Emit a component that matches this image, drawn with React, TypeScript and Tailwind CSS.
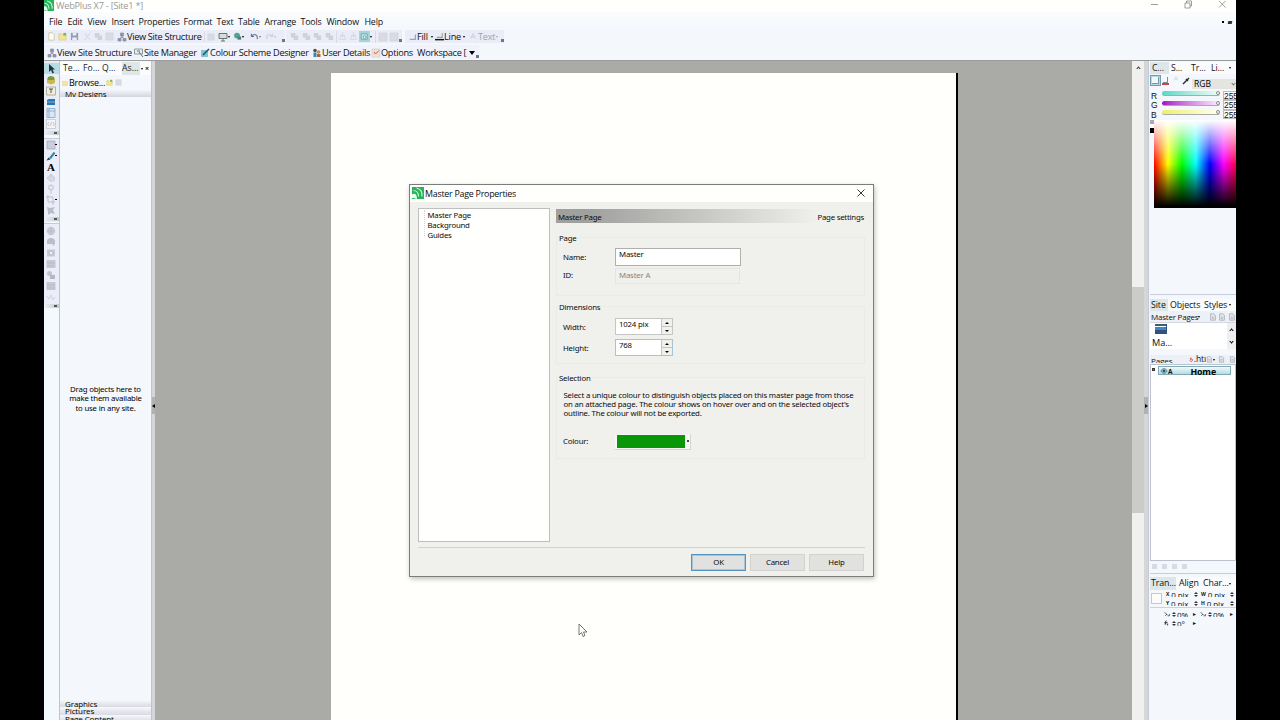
import type { ReactNode } from 'react';

const menuItems = [
    { label: 'File', width: 'w-[18.5px]' },
    { label: 'Edit', width: 'w-5' },
    { label: 'View', width: 'w-6' },
    { label: 'Insert', width: 'w-[27px]' },
    { label: 'Properties', width: 'w-[45px]' },
    { label: 'Format', width: 'w-[33px]' },
    { label: 'Text', width: 'w-[21.5px]' },
    { label: 'Table', width: 'w-[26.5px]' },
    { label: 'Arrange', width: 'w-9' },
    { label: 'Tools', width: 'w-[26px]' },
    { label: 'Window', width: 'w-[38px]' },
    { label: 'Help', width: 'w-5' },
];

const Logo = ({ className }: { className: string }) => (
    <svg viewBox="0 0 12 12" className={className}>
        <rect width="12" height="12" fill="#27b45c" />
        <path d="M1.500 3.500c3 0 5 2 5 6M4.500 1c4 1 6 4 5.500 8.500" fill="none" stroke="#c9f7d7" strokeWidth="1.1" />
        <path d="M0 7.500c3-2 5 0 5 4.500-2-.5-3.500-1-5-1z" fill="#eafff0" />
    </svg>
);

// Small glyphs shared by the toolbars, all on a 10x10 grid
const shapes: Record<string, ReactNode> = {
    page: <path d="M2 1h4l2 2v6H2z" fill="#fffef4" stroke="#c5bd94" strokeWidth=".8" />,
    doc: <><path d="M2 1h4l2 2v6H2z" fill="#e4e9ef" stroke="#969da8" strokeWidth=".8" /><path d="M3.500 5h3M3.500 7h3" stroke="#8b95a3" strokeWidth=".7" /></>,
    folder: <><path d="M1 2h3l1 1h4v6H1z" fill="#f3e58b" stroke="#d4c66f" strokeWidth=".6" /><path d="M6 1h3v3H6z" fill="#7faf6e" /></>,
    browse: <path d="M1 2h3l1 1h4v6H1z" fill="#f6e9a0" stroke="#dccb7e" strokeWidth=".8" />,
    save: <><path d="M1 1h8v8H1z" fill="#8f9db5" /><path d="M3 1h4v3H3zM2.5 6h5v3h-5z" fill="#e9eff7" /></>,
    cut: <path d="M2 1l6 8M8 1L2 9" stroke="#d3d5dd" strokeWidth="1.1" fill="none" />,
    copy: <path d="M1 1h5v5H1zM4 4h5v5H4z" fill="#cfd1da" />,
    grid: <path d="M1 1h8v8H1z" fill="#d9dbe3" stroke="#cfd2dc" strokeWidth=".6" />,
    tree: <><path d="M3.500 1h3v3h-3zM1 6.500h3V9H1zM6 6.500h3V9H6z" fill="#8d94a8" stroke="#8d94a8" strokeWidth=".8" /><path d="M5 3v2.500M2 7L5 5l3 2" stroke="#8d94a8" fill="none" /></>,
    manager: <><path d="M.5 1h8v5h-8z" fill="#e6edee" stroke="#788587" strokeWidth=".8" /><path d="M5 4l4 5M3 3h3" stroke="#657276" /></>,
    scheme: <><path d="M1 2h7v7H1z" fill="#7cc5d8" /><path d="M3 7l6-6" stroke="#2f5068" strokeWidth="1.6" /></>,
    user: <><circle cx="3" cy="2.500" r="1.800" fill="#52504b" /><circle cx="6.500" cy="4" r="1.800" fill="#c78a5a" /><path d="M1.500 4.500h3V9h-3z" fill="#3e85a8" /><path d="M5 6h3.500v3H5z" fill="#ae6046" /></>,
    options: <><path d="M1 1h8v8H1z" fill="#f4ded4" stroke="#d2c9c3" strokeWidth=".6" /><path d="M3 4l1.500 2L8 2.500" stroke="#b4624a" fill="none" /></>,
    screen: <><path d="M1 1.500h8v5H1z" fill="#d4dedb" stroke="#6a7471" /><path d="M5 6v3M3 9h4" stroke="#6a7471" /></>,
    globe: <><circle cx="4.500" cy="4" r="3.300" fill="#4fa68f" /><path d="M5 5h4v3.500H5z" fill="#517c86" /></>,
    eye: <><path d="M1 5c2-4 6-4 8 0-2 4-6 4-8 0z" fill="#8db8c4" stroke="#4e6f80" strokeWidth=".8" /><circle cx="5" cy="5" r="1.500" fill="#34546b" /></>,
    undo: <path d="M1.500 2v3h3M2 5c2-4 7-2 6 3" fill="none" stroke="#67749a" strokeWidth="1.200" />,
    redo: <path d="M8.500 2v3h-3M8 5C6 1 1 3 2 8" fill="none" stroke="#ced1da" strokeWidth="1.200" />,
    snap: <><path d="M0 0h10v10H0z" fill="#a3d6da" /><path d="M2 2.500h5.500v5H2z" fill="#c4e6e7" stroke="#659fae" strokeWidth=".7" /><circle cx="5" cy="5.500" r="1.300" fill="#e3f2f3" stroke="#5b9aaa" strokeWidth=".7" /></>,
    align: <path d="M5 0v5M2 4h6M1 8h8M2 7l2-3M8 7L6 4" stroke="#d1d4dc" fill="none" />,
    fill: <path d="M1 8h7V2" stroke="#a1a5ad" strokeWidth="1.600" fill="none" />,
    line: <><path d="M2 6h6V1" stroke="#9a9ea7" strokeWidth="1.200" fill="none" /><path d="M0 8.500h10" stroke="#111" strokeWidth="1.600" /></>,
    text: <path d="M2 7l3-6 3 6M3 5h4" fill="none" stroke="#c6c9d1" />,
    pointer: <path d="M3 0v8l2-2 1.500 3.500 1.500-.7L6.500 5.500H9z" fill="#1d3545" />,
    apple: <><path d="M1 3l4-2 4 2v5L5 9.500 1 8z" fill="#c9b74f" /><path d="M2 2l3-1 3 1v3H2z" fill="#719b45" /></>,
    frame: <><path d="M.5 1h9v8h-9z" fill="#f0eedc" stroke="#a3a18d" strokeWidth=".8" /><path d="M3 3h4M5 3v4" stroke="#51514d" /></>,
    button: <><path d="M1 3l2-1h6v6H1z" fill="#2d74ad" /><path d="M1 5h8" stroke="#75b2dd" /></>,
    table: <path d="M1 .5h8v9H1zM1 3h8M3 .5v9" fill="#d7e7f5" stroke="#84a7c6" strokeWidth=".8" />,
    code: <><path d="M.5.5h9v9h-9z" fill="#f2f4f6" stroke="#b5bbc3" strokeWidth=".6" /><path d="M3 3L1.500 5 3 7M7 3l1.500 2L7 7M5.500 3l-1 4" stroke="#9ca4af" strokeWidth=".6" fill="none" /></>,
    square: <path d="M1 1h8v8H1z" fill="#cbccdd" stroke="#a5a7b8" strokeWidth=".8" />,
    pen: <><path d="M3 7l4.500-6 2 1L5 8z" fill="#35899e" /><path d="M.5 9.500l2-3 2 2z" fill="#283b48" /></>,
    bucket: <path d="M5 1l4 4-4 4-4-4zM8 5v4M5 1v4" fill="#d9dbe3" stroke="#c5c8d0" strokeWidth=".8" />,
    pin: <><circle cx="5" cy="3.500" r="2.500" fill="#e5e7ef" stroke="#bfc2cc" /><path d="M5 6v4" stroke="#bfc2cc" /></>,
    crop: <path d="M2 0v7h7M0 2h7v8" fill="none" stroke="#bbbfc9" />,
    bolt: <path d="M1 1l3 1 5-1-2 3 2 4-4-1-3 2V6z" fill="#b9bdc8" />,
    disc: <><circle cx="5" cy="5" r="4.200" fill="#c8cbd5" /><path d="M1 5h8M5 1v8" stroke="#b7bac6" strokeWidth=".6" /></>,
    stamp: <path d="M1 4c0-4 8-4 8 0v2l-1 3-2-2H1z" fill="#babec9" />,
    camera: <><path d="M1 1.500h8v7H1z" fill="#c8cbd5" /><circle cx="5" cy="5" r="2" fill="#eef0f5" stroke="#b6bac5" /></>,
    film: <><path d="M.5 1h9v8h-9z" fill="#c6c9d3" /><path d="M1 4h8M1 7h8" stroke="#b3b7c1" strokeWidth=".6" /></>,
    shapes: <><circle cx="3.500" cy="3.500" r="2.500" fill="#c1c4cf" /><path d="M4 5h5v4H4z" fill="#b4b8c4" /></>,
    wave: <path d="M1 4l2 3 2-4 2 5 2-3" fill="none" stroke="#d0d3db" />,
    scale: <path d="M1 2l5 5M2 8l3-3M6 8h3V5" stroke="#333" strokeWidth="1.200" fill="none" />,
    rotate: <path d="M2 8V4h4M4 1L1.500 4 4 7M6 6v3" stroke="#222" strokeWidth="1.400" fill="none" />,
    refresh: <path d="M4 1L2 4l3 1M2 4c3-1 6 0 5 3S2 9 2 6.500" stroke="#cc3a61" strokeWidth="1.400" fill="none" />,
};

const Icon = ({ name, className = 'size-[9px]' }: { name: string; className?: string }) => (
    <svg viewBox="0 0 10 10" className={`${className} shrink-0`}>{shapes[name]}</svg>
);

const Down = ({ className = 'border-t-black' }: { className?: string }) => (
    <span className={`inline-block shrink-0 border-x-[1.5px] border-t-2 border-x-transparent ${className}`} />
);

const Grip = () => <span className="mb-px size-[3px] shrink-0 self-end bg-[#73777c]" />;

const Tool = ({ icon, label, width }: { icon: string; label: string; width: string }) => (
    <span className={`flex shrink-0 items-center ${width}`}>
        <Icon name={icon} className="size-[10px]" />
        <span>{label}</span>
    </span>
);

function Header() {
    return (
        <header className="h-[60px] shrink-0 bg-[#f4f8fd] text-[9.2px] leading-none text-[#111]">
            <div className="flex h-3 items-start justify-between bg-[#fffffd] text-[#999]">
                <div className="flex items-center">
                    <Logo className="-ml-px size-[11px]" />
                    <span className="ml-0.5 tracking-[-0.24px]">WebPlus X7 - [Site1 *]</span>
                </div>
                <svg viewBox="0 0 86 10" className="h-2.5 w-[86px]" fill="none" stroke="#858585" strokeWidth=".8">
                    <path d="M1 4.500h7M35 3h5v5h-5zM36.500 3V1h5v5H40M69 1l6.500 6.500M75.500 1L69 7.500" />
                </svg>
            </div>
            <div className="flex h-[17px] items-center bg-gradient-to-b from-[#fbfdfd] to-[#f4f8fd] pl-[5px] pt-[3px]">
                {menuItems.map((item) => (
                    <span key={item.label} className={`shrink-0 text-[8.9px] tracking-[-0.2px] ${item.width}`}>{item.label}</span>
                ))}
                <span className="ml-auto flex items-center gap-1 pr-1"><i className="h-0.5 w-0.5 bg-black" /><i className="h-[3px] w-1 -skew-x-12 bg-[#333]" /></span>
            </div>
            <div className="flex h-[15px] items-center tracking-[-0.22px]">
                <div className="flex h-[13px] w-[241px] items-center bg-[#eaecf7] pl-[3px]">
                    <Icon name="page" /><Icon name="folder" className="ml-0.5 size-[9px]" /><Icon name="save" className="ml-[3px] size-[9px]" />
                    <Icon name="cut" className="ml-1 size-[9px]" /><Icon name="copy" className="ml-0.5 size-[9px]" /><Icon name="grid" className="ml-0.5 size-[9px]" />
                    <span className="ml-[3px] flex w-[88px] shrink-0 items-center border-r border-[#d8dbe5] tracking-[-0.32px]"><Icon name="tree" className="size-[10px]" /><span>View Site Structure</span></span>
                    <Icon name="grid" className="ml-0.5 size-2" /><Icon name="screen" className="ml-[3px] size-2.5" /><Down />
                    <Icon name="globe" className="ml-[3px] size-[9px]" /><Down />
                    <Icon name="undo" className="ml-1.5 size-[9px]" /><Down className="border-t-[#777]" />
                    <Icon name="redo" className="ml-1 size-[9px]" /><Down className="border-t-[#bbb]" /><span className="ml-auto flex self-stretch"><Grip /></span>
                </div>
                <div className="ml-px flex h-[13px] w-[116px] items-center bg-[#eaecf7] pl-[4px]">
                    <div className="flex gap-[2.5px]"><Icon name="copy" /><Icon name="copy" /><Icon name="copy" /><Icon name="copy" /></div>
                    <i className="ml-0.5 h-3 w-px bg-[#d8dbe5]" />
                    <Icon name="align" className="ml-[2px] size-[9px]" /><Icon name="align" className="ml-0.5 size-[9px]" />
                    <Icon name="snap" className="ml-px size-[11px]" /><Down />
                    <i className="mx-[3px] h-3 w-px bg-[#d8dbe5]" />
                    <Icon name="grid" className="size-2.5" /><Icon name="grid" className="ml-px size-2.5" />
                    <span className="ml-auto flex self-stretch"><Grip /></span>
                </div>
                <div className="ml-[3px] flex h-[13px] w-[99px] items-center bg-[#eaecf7] pl-[4px]">
                    <Icon name="fill" className="size-2" /><span className="w-3">Fill</span><Down className="ml-0.5 border-t-black" />
                    <Icon name="line" className="ml-0.5 size-[9px]" /><span className="w-[17px]">Line</span><Down className="ml-0.5 border-t-black" />
                    <Icon name="text" className="ml-1 size-2" /><span className="ml-px w-[17px] text-[#a2a4ab]">Text</span><Down className="ml-px border-t-[#aaa]" />
                    <span className="ml-auto flex self-stretch"><Grip /></span>
                </div>
            </div>
            <div className="flex h-4 items-center">
                <div className="flex h-3.5 w-[435px] items-center bg-[#f0f3fb] pl-[3px] pt-px tracking-[-0.3px]">
                    <Tool icon="tree" label="View Site Structure" width="w-[87px]" />
                    <Tool icon="manager" label="Site Manager" width="w-[66px]" />
                    <Tool icon="scheme" label="Colour Scheme Designer" width="w-[112px]" />
                    <Tool icon="user" label="User Details" width="w-[59px]" />
                    <Tool icon="options" label="Options" width="w-[46px]" />
                    <span className="shrink-0">Workspace</span><span className="ml-0.5 w-1 shrink-0">[</span>
                    <span className="ml-px border-x-[3.5px] border-t-4 border-x-transparent border-t-black" />
                    <span className="ml-auto flex self-stretch"><Grip /></span>
                </div>
            </div>
        </header>
    );
}

const ToolButton = ({ name, arrow }: { name: string; arrow?: boolean }) => (
    <div className="flex h-[11px] w-[15px] items-center pl-0.5">
        <Icon name={name} className="size-2.5" />
        {arrow && <i className="-ml-px size-[1.5px] bg-black" />}
    </div>
);

const ToolEnd = () => (
    <div className="flex h-1 justify-end bg-gradient-to-r from-[#eef1f8] to-[#c2c6ce]"><i className="mt-px mr-0.5 h-0.5 w-[3px] bg-[#555]" /></div>
);

function Toolbox() {
    return (
        <aside className="w-[15px] shrink-0 bg-[#f4f9fc]">
            <div className="h-[74px] bg-[#e9edf8] pt-0.5">
                <div className="bg-[#b7dce3]"><ToolButton name="pointer" /></div>
                {['apple', 'frame', 'button', 'table', 'code'].map((name) => <ToolButton key={name} name={name} />)}
                <div className="pt-0.5"><ToolEnd /></div>
            </div>
            <div className="mt-[3px] h-[84px] border-t border-[#c5cbd6] bg-[#ebeef9]">
                <ToolButton name="square" arrow />
                <ToolButton name="pen" arrow />
                <div className="flex h-[11px] items-center pl-[3px] pt-0.5 font-['Liberation_Serif',serif] text-[11px] font-bold leading-none">A</div>
                <ToolButton name="bucket" />
                <ToolButton name="pin" />
                <ToolButton name="crop" arrow />
                <ToolButton name="bolt" />
                <div className="pt-px"><ToolEnd /></div>
            </div>
            <div className="mt-px h-[85px] border-t border-[#c5cbd6] bg-[#ebeef9] pt-px">
                {['disc', 'stamp', 'camera', 'film', 'shapes', 'film', 'wave'].map((name, i) => <ToolButton key={i} name={name} />)}
                <div className="pt-0.5"><ToolEnd /></div>
            </div>
        </aside>
    );
}

function AssetPanel() {
    return (
        <aside className="flex w-[93px] shrink-0 flex-col border-x border-[#bfc2cf] bg-[#f4f8fc] text-[8.7px] leading-none">
            <div className="mt-px flex h-[13px] items-center bg-[#fbfcfd] pl-[3px] text-[#222]">
                <span className="w-5">Te...</span><span className="w-[19px]">Fo...</span><span className="w-5">Q...</span>
                <span className="flex h-full w-[18px] items-center bg-[#dce7e9]">As...</span>
                <Down className="ml-px border-t-black" /><span className="ml-[2px] text-[7px] font-bold">×</span>
            </div>
            <div className="flex h-[14px] items-center pl-0.5 pt-px">
                <Icon name="browse" className="size-1.5" /><span className="w-[37px] pl-px text-[9px] tracking-[-0.25px]">Browse...</span>
                <Icon name="folder" className="ml-px size-[7px]" /><Icon name="grid" className="ml-0.5 size-[7px]" />
            </div>
            <div className="mt-px flex h-[7px] items-start overflow-hidden bg-gradient-to-b from-[#f3f5fa] to-[#d4d5df] pl-[5px] text-[8px] leading-[8px] tracking-[-0.1px]">My Designs</div>
            <div className="pt-[288px] text-center font-['Noto_Sans',sans-serif] text-[7.8px] leading-[9.3px] tracking-[-0.18px]">
                Drag objects here to<br />make them available<br />to use in any site.
            </div>
            <div className="mt-auto h-5 shrink-0 overflow-hidden text-[8px] leading-[8px] tracking-[-0.1px]">
                {['Graphics', 'Pictures', 'Page Content'].map((name) => (
                    <div key={name} className="h-[7.4px] bg-gradient-to-b from-[#f7f8fb] to-[#d9dae3] pl-[5px]">{name}</div>
                ))}
            </div>
        </aside>
    );
}

const Splitter = ({ point, width }: { point: string; width: string }) => (
    <div className={`flex shrink-0 items-start bg-[#d5d6d8] pt-[336px] ${width}`}>
        <div className="flex h-[17px] w-full items-center bg-[#b0b1b2]"><span className={`border-y-[2.5px] border-y-transparent ${point}`} /></div>
    </div>
);

const channels = [
    { name: 'R', gradient: 'from-[#55d8c5] to-[#eefcf9]' },
    { name: 'G', gradient: 'from-[#a500b9] to-[#fdeeff]' },
    { name: 'B', gradient: 'from-[#efef62] to-[#fffff0]' },
];

function ColourPanel() {
    return (
        <section className="h-[234px] border-b border-[#c8ccdb]">
            <div className="mt-px flex h-3 items-center bg-[#f9fbfd] text-[8.7px]">
                <span className="flex h-full w-[19px] items-center bg-[#dce7e9] pl-0.5">C...</span>
                <span className="ml-0.5 w-5">S...</span><span className="w-5">Tr...</span><span className="w-[18px]">Li...</span><Down />
            </div>
            <div className="flex h-[15px] items-center">
                <div className="mb-0.5 flex size-[11px] items-center justify-center border border-[#6c9fae] bg-[#b7d8e3]"><i className="size-[7px] border-b border-r border-[#7d98a8] bg-[#f1f8fc]" /></div>
                <div className="mb-0.5 ml-px h-[9px] w-[7px] border-b-2 border-[#ce4256] p-px"><i className="block h-1.5 border-b border-r border-[#888]" /></div>
                <Icon name="text" className="mb-1.5 ml-1 size-[6px]" />
                <svg viewBox="0 0 8 8" className="mb-0.5 ml-[3px] size-2"><path d="M1 7l4-4M4 2l2 2M5 3l2-2" stroke="#252a31" strokeWidth="1.400" /></svg>
                <div className="ml-0.5 mt-[5px] flex h-2.5 flex-1 items-center bg-[#e4e4e1] pl-0.5 text-[8.5px] tracking-normal text-black">RGB<span className="ml-auto mb-[2px] mr-px size-[3px] rotate-45 border-b border-r border-[#777]" /></div>
            </div>
            <div className="h-[29px] font-['Liberation_Sans',sans-serif] text-[8.5px]">
                {channels.map((ch) => (
                    <div key={ch.name} className="flex h-[9.5px] items-center">
                        <span className="w-[12px] pt-1 pl-px">{ch.name}</span>
                        <div className={`flex h-[5px] w-[60px] items-center justify-end rounded-sm border-b border-[#aaa] bg-gradient-to-r ${ch.gradient}`}><i className="size-1 rounded-full border border-[#888] bg-white" /></div>
                        <span className="ml-[3px] mt-[3px] h-[9.5px] w-[13px] border border-r-0 border-[#bbb] bg-white tracking-[-0.1px]">255</span>
                    </div>
                ))}
            </div>
            <div className="mt-[2px] flex">
                <div className="w-1 shrink-0"><i className="block h-1 bg-[#aaa]" /><i className="block h-1 bg-white" /><i className="block h-[5px] bg-black" /></div>
                <div className="h-[88px] flex-1 bg-[linear-gradient(to_bottom,#fff_0%,transparent_50%,#000_98%),linear-gradient(to_right,#f00,#ff0_17%,#0f0_34%,#0ff_51%,#00f_68%,#f0f_85%,#f04)]" />
            </div>
        </section>
    );
}

const Updown = () => <span className="flex flex-col gap-px"><i className="border-x-2 border-b-2 border-x-transparent border-b-[#333]" /><i className="border-x-2 border-t-2 border-x-transparent border-t-[#333]" /></span>;

const Measure = ({ name, width }: { name: string; width: string }) => (
    <span className={`flex items-center ${width}`}>
        <b className="mr-0.5 text-[5px] leading-none">{name}</b>
        <span className="flex h-1.5 w-[18px] items-start overflow-hidden text-[8px] leading-[8px]">0 pix</span>
        <span className="ml-auto"><Updown /></span>
    </span>
);

function RightDock() {
    return (
        <aside className="flex w-[88px] shrink-0 flex-col overflow-hidden whitespace-nowrap border-l border-[#c5c9d6] bg-[#f4f8fc] pl-px text-[8.8px] leading-none tracking-[-0.1px] text-[#111]">
            <ColourPanel />
            <section className="h-[279px] border-b border-[#c8ccdb] pt-1">
                <div className="flex h-3 items-center bg-[#f9fbfd]">
                    <span className="flex h-full w-[18px] items-center bg-[#dce7e9] pl-px">Site</span><span className="ml-0.5 w-[33px]">Objects</span><span className="w-[26px] pl-px">Styles</span><Down />
                </div>
                <div className="flex h-[11px] items-center bg-[#edf0f6] pl-px text-[8px] tracking-[-0.22px]"><span className="w-[52px]">Master Pages</span><Down /><Icon name="doc" className="ml-[9px] size-2" /><Icon name="doc" className="ml-px size-2" /><Icon name="doc" className="ml-0.5 size-2" /></div>
                <div className="flex h-[27px] border-t border-[#d5d8e0] bg-white">
                    <div className="flex flex-1 flex-col pl-0.5">
                        <div className="ml-[3px] mt-px h-[10px] w-3 border-b-4 border-r border-[#32517c] bg-[#3f86c7]"><i className="block h-[3px] w-full border-b border-white bg-[#435d70]" /></div>
                        <span className="mt-1 text-[9.2px]">Ma...</span>
                    </div>
                    <div className="flex w-[9px] flex-col items-center justify-between bg-[#eeeff0] py-1.5"><i className="size-[3px] rotate-45 border-l border-t border-black" /><i className="size-[3px] rotate-45 border-b border-r border-black" /></div>
                </div>
                <div className="mt-[6px] flex h-[9px] items-center bg-[#edf0f6] pl-px">
                    <span className="flex h-[6px] w-[41px] overflow-hidden text-[8px] leading-[8px]">Pages</span><Icon name="refresh" className="size-[5px]" /><span className="w-[13px] text-[8.5px]">.htı</span><Icon name="doc" className="size-[7px]" /><Down /><Icon name="doc" className="ml-[3px] size-[7px]" /><Icon name="doc" className="ml-1 size-[7px]" />
                </div>
                <div className="h-[197px] border border-[#bcc3cf] bg-white pt-px">
                    <div className="flex items-start"><i className="ml-px mt-0.5 size-[3px] border border-[#333] bg-[#888]" />
                        <div className="ml-[3px] flex h-[9px] w-[73px] items-center border border-[#81a8b5] bg-gradient-to-b from-[#effafb] to-[#b5dde3]"><Icon name="eye" className="ml-px size-2" /><b className="mt-1 text-[6.5px]">A</b><b className="ml-[18px] mt-[3px] text-[8.8px] text-black">Home</b></div>
                    </div>
                </div>
                <div className="flex h-2.5 items-center gap-[5px] pl-0.5">{[0, 1, 2, 3].map((i) => <i key={i} className="size-[5px] bg-[#d9dbe4]" />)}</div>
            </section>
            <section className="pt-[3px]">
                <div className="flex h-[13px] items-center bg-[#f9fbfd]"><span className="flex h-full w-[26px] items-center bg-[#dce7e9] pl-px">Tran...</span><span className="ml-[3px] w-6">Align</span><span className="w-[26px]">Char...</span><Down /></div>
                <div className="flex h-[18px] items-center border-b border-[#d4d2c8]">
                    <i className="ml-px size-[11px] shrink-0 border border-[#d5c8a0] bg-[#fbfcfa]" />
                    <div className="ml-1 flex flex-1 flex-col gap-[3px]">
                        <div className="flex"><Measure name="X" width="w-8" /><Measure name="W" width="ml-[3px] w-[33px]" /></div>
                        <div className="flex"><Measure name="Y" width="w-8" /><Measure name="H" width="ml-[3px] w-[33px]" /></div>
                    </div>
                </div>
                <div className="flex h-3 items-center pl-3.5 text-[8px]"><Icon name="scale" className="mr-0.5 size-1.5" /><Updown /><span className="flex h-1.5 w-[17px] overflow-hidden pl-px leading-[8px]">0%</span><span className="mr-1 text-[6px]">▸</span><Icon name="scale" className="mr-0.5 size-1.5" /><Updown /><span className="flex h-1.5 w-[18px] overflow-hidden pl-px leading-[8px]">0%</span><span className="text-[6px]">▸</span></div>
                <div className="flex h-[6px] items-center pl-3.5 text-[8px]"><Icon name="rotate" className="mr-0.5 size-1.5" /><Updown /><span className="flex h-1.5 w-[17px] overflow-hidden pl-px leading-[8px]">0°</span><span className="text-[6px]">▸</span></div>
            </section>
        </aside>
    );
}

const Group = ({ label, className, children }: { label: string; className: string; children: ReactNode }) => (
    <fieldset className={`w-[309px] border border-[#eaeae7] ${className}`}>
        <div className="-mt-[4px] ml-px flex"><span className="bg-[#f0f0ed] px-px leading-[9px]">{label}</span></div>
        {children}
    </fieldset>
);

const Spin = ({ value, focus }: { value: string; focus?: boolean }) => (
    <div className={`flex h-[17px] w-[58px] border bg-[#f0f0ed] ${focus ? 'border-[#a9c3d6]' : 'border-[#c5c5c3]'}`}>
        <span className="w-[45px] bg-white pl-[3px] pt-px leading-[9px]">{value}</span>
        <div className="flex flex-1 flex-col border-l border-[#c5c5c3]">
            <span className="flex flex-1 items-center justify-center border-b border-[#c5c5c3]"><i className="border-x-2 border-b-2 border-x-transparent border-b-black" /></span>
            <span className="flex flex-1 items-center justify-center"><i className="border-x-2 border-t-2 border-x-transparent border-t-black" /></span>
        </div>
    </div>
);

function PropertiesDialog() {
    return (
        <div className="absolute left-[409px] top-[184px] flex h-[393px] w-[465px] flex-col border border-[#7c7d7b] bg-[#f0f0ed] font-['Noto_Sans',sans-serif] text-[7.8px] leading-none tracking-[-0.18px] text-[#0c0c0c] shadow-[1px_2px_5px_#00000040]">
            <div className="flex h-[17px] shrink-0 items-center bg-[#fffffd] pl-0.5 font-['Open_Sans',sans-serif] text-[8.9px] tracking-[-0.25px]">
                <Logo className="mb-px size-3" /><span className="ml-px mt-px">Master Page Properties</span>
                <svg viewBox="0 0 8 8" className="mb-px ml-auto mr-2 size-2" stroke="#222" strokeWidth=".9"><path d="M.5.5l7 7M7.500.5l-7 7" /></svg>
            </div>
            <div className="mt-1.5 flex h-[334px] pl-2">
                <div className="w-[132px] shrink-0 border border-[#bfc0bd] bg-[#fffffe] pl-[4px] pt-px">
                    <div className="pl-1">
                        <div className="-ml-[3px] h-[26px] border-l border-dotted border-[#d5d5d2] pl-[2.5px]">
                            {['Master Page', 'Background', 'Guides'].map((name) => <div key={name} className="h-[10.2px] leading-[10.2px] tracking-[-0.22px]">{name}</div>)}
                        </div>
                    </div>
                </div>
                <div className="ml-[6px] w-[309px] pt-px">
                    <div className="flex h-[14px] items-center justify-between bg-gradient-to-r from-[#a0a19e] from-10% to-[#f0f0ed] to-85% px-0.5 pt-[3px] tracking-[-0.22px]"><span>Master Page</span><span className="-mr-px">Page settings</span></div>
                    <Group label="Page" className="mt-3.5 h-[59px]">
                        <div className="mt-[5px] flex items-center pl-1.5"><span className="w-[52px] pt-0.5">Name:</span><div className="h-[18px] w-[126px] border border-[#afb0ae] bg-white pl-[3px] pt-px leading-[9px]">Master</div></div>
                        <div className="mt-[2px] flex items-center pl-1.5"><span className="w-[52px]">ID:</span><div className="h-4 w-[125px] border border-[#e5e5e2] pl-[3px] pt-[2px] leading-[9px] text-[#858585]">Master A</div></div>
                    </Group>
                    <Group label="Dimensions" className="mt-2.5 h-[58px]">
                        <div className="mt-1.5 flex items-center pl-1.5"><span className="w-[52px] pt-0.5">Width:</span><Spin value="1024 pix" /></div>
                        <div className="mt-1 flex items-center pl-1.5"><span className="w-[52px] pt-0.5">Height:</span><Spin value="768" focus /></div>
                    </Group>
                    <Group label="Selection" className="mt-[13px] h-[82px]">
                        <p className="mt-2 whitespace-nowrap pl-[6.5px] leading-[9.2px]">Select a unique colour to distinguish objects placed on this master page from those<br />on an attached page. The colour shows on hover over and on the selected object's<br />outline. The colour will not be exported.</p>
                        <div className="mt-[15px] flex items-center pl-1.5"><span className="w-[52px]">Colour:</span><div className="flex h-4 w-[76px] items-center border-b border-r border-[#d5d5d1] bg-[#f7f7f5] pl-[2px]"><i className="h-[13px] w-[68px] bg-[#099608]" /><i className="ml-0.5 size-[1.5px] bg-[#444]" /></div></div>
                    </Group>
                </div>
            </div>
            <div className="mx-2 mt-[5px] border-t border-[#d2d3d0]" />
            <div className="mr-[9px] mt-[6px] flex justify-end gap-1">
                <button className="h-[17px] w-[55px] border border-[#5794bd] bg-[#e1e2df] pt-px leading-none ring-1 ring-inset ring-[#a9c6d9]">OK</button>
                <button className="h-[17px] w-[55px] border border-[#d2d3d0] bg-[#e1e2df] pt-px leading-none">Cancel</button>
                <button className="h-[17px] w-[55px] border border-[#d2d3d0] bg-[#e1e2df] pt-px leading-none">Help</button>
            </div>
        </div>
    );
}

export default function App() {
    return (
        <div className="relative h-[720px] w-[1280px] overflow-hidden bg-black font-['Open_Sans',sans-serif]">
            <div className="mx-auto flex h-full w-[1192px] flex-col overflow-hidden whitespace-nowrap">
                <Header />
                <main className="flex h-[660px] border-t border-[#9a9b9b]">
                    <Toolbox />
                    <AssetPanel />
                    <Splitter width="w-[3px]" point="border-r-[3px] border-r-black" />
                    <div className="flex flex-1 bg-[#aaaba6] pl-[176px] pt-3">
                        <div className="w-[627px] border-r-2 border-black bg-[#fffffc]" />
                    </div>
                    <div className="flex w-3 shrink-0 flex-col bg-[#f0f0ee]">
                        <div className="flex h-[226px] justify-center pt-1.5"><i className="size-[3px] rotate-45 border-l border-t border-[#333]" /></div>
                        <div className="h-[226px] bg-[#cbccc8]" />
                    </div>
                    <Splitter width="w-1" point="ml-px border-l-[3px] border-l-black" />
                    <RightDock />
                </main>
            </div>
            <PropertiesDialog />
            <svg viewBox="0 0 10 15" className="absolute left-[578px] top-[623px] h-[15px] w-2.5"><path d="M1 1v11l2.500-2.500L5 13.500l2-1L5.500 9H9z" fill="#fff" stroke="#555" strokeWidth=".8" /></svg>
        </div>
    );
}
